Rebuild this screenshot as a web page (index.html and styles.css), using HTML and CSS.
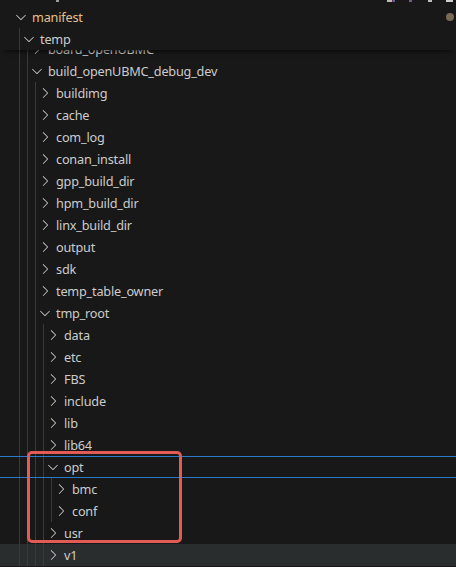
FILE: index.html
```html
<!DOCTYPE html>
<html>
<head>
<meta charset="utf-8">
<link rel="stylesheet" href="styles.css">
</head>
<body>
<div class="explorer">
  <div class="top-strip">
    <span class="frag f1"></span>
    <span class="spacer"></span>
    <span class="frag f2"></span>
    <span class="frag f3"></span>
    <span class="frag f4"></span>
    <span class="frag f5"></span>
  </div>
  <div class="sticky">
    <div class="row">
      <span class="twistie"><svg viewBox="0 0 16 16"><path d="M7.976 10.072l4.357-4.357.62.618L8.284 11h-.618L3 6.333l.619-.618 4.357 4.357z"/></svg></span>
      <span class="label modified">manifest</span>
      <span class="dot"></span>
    </div>
    <div class="row">
      <span class="ig"></span>
      <span class="twistie"><svg viewBox="0 0 16 16"><path d="M7.976 10.072l4.357-4.357.62.618L8.284 11h-.618L3 6.333l.619-.618 4.357 4.357z"/></svg></span>
      <span class="label">temp</span>
    </div>
  </div>
  <div class="list">
    <div class="partial"><div class="row"><span class="ig"></span><span class="ig"></span><span class="twistie"><svg viewBox="0 0 16 16"><path d="M10.072 8.024L5.715 3.667l.618-.62L11 7.716v.618L6.333 13l-.618-.619 4.357-4.357z"/></svg></span><span class="label">board_openUBMC</span></div></div>
    <div class="row"><span class="ig"></span><span class="ig"></span><span class="twistie"><svg viewBox="0 0 16 16"><path d="M7.976 10.072l4.357-4.357.62.618L8.284 11h-.618L3 6.333l.619-.618 4.357 4.357z"/></svg></span><span class="label">build_openUBMC_debug_dev</span></div>
    <div class="row"><span class="ig"></span><span class="ig"></span><span class="ig"></span><span class="twistie"><svg viewBox="0 0 16 16"><path d="M10.072 8.024L5.715 3.667l.618-.62L11 7.716v.618L6.333 13l-.618-.619 4.357-4.357z"/></svg></span><span class="label">buildimg</span></div>
    <div class="row"><span class="ig"></span><span class="ig"></span><span class="ig"></span><span class="twistie"><svg viewBox="0 0 16 16"><path d="M10.072 8.024L5.715 3.667l.618-.62L11 7.716v.618L6.333 13l-.618-.619 4.357-4.357z"/></svg></span><span class="label">cache</span></div>
    <div class="row"><span class="ig"></span><span class="ig"></span><span class="ig"></span><span class="twistie"><svg viewBox="0 0 16 16"><path d="M10.072 8.024L5.715 3.667l.618-.62L11 7.716v.618L6.333 13l-.618-.619 4.357-4.357z"/></svg></span><span class="label">com_log</span></div>
    <div class="row"><span class="ig"></span><span class="ig"></span><span class="ig"></span><span class="twistie"><svg viewBox="0 0 16 16"><path d="M10.072 8.024L5.715 3.667l.618-.62L11 7.716v.618L6.333 13l-.618-.619 4.357-4.357z"/></svg></span><span class="label">conan_install</span></div>
    <div class="row"><span class="ig"></span><span class="ig"></span><span class="ig"></span><span class="twistie"><svg viewBox="0 0 16 16"><path d="M10.072 8.024L5.715 3.667l.618-.62L11 7.716v.618L6.333 13l-.618-.619 4.357-4.357z"/></svg></span><span class="label">gpp_build_dir</span></div>
    <div class="row"><span class="ig"></span><span class="ig"></span><span class="ig"></span><span class="twistie"><svg viewBox="0 0 16 16"><path d="M10.072 8.024L5.715 3.667l.618-.62L11 7.716v.618L6.333 13l-.618-.619 4.357-4.357z"/></svg></span><span class="label">hpm_build_dir</span></div>
    <div class="row"><span class="ig"></span><span class="ig"></span><span class="ig"></span><span class="twistie"><svg viewBox="0 0 16 16"><path d="M10.072 8.024L5.715 3.667l.618-.62L11 7.716v.618L6.333 13l-.618-.619 4.357-4.357z"/></svg></span><span class="label">linx_build_dir</span></div>
    <div class="row"><span class="ig"></span><span class="ig"></span><span class="ig"></span><span class="twistie"><svg viewBox="0 0 16 16"><path d="M10.072 8.024L5.715 3.667l.618-.62L11 7.716v.618L6.333 13l-.618-.619 4.357-4.357z"/></svg></span><span class="label">output</span></div>
    <div class="row"><span class="ig"></span><span class="ig"></span><span class="ig"></span><span class="twistie"><svg viewBox="0 0 16 16"><path d="M10.072 8.024L5.715 3.667l.618-.62L11 7.716v.618L6.333 13l-.618-.619 4.357-4.357z"/></svg></span><span class="label">sdk</span></div>
    <div class="row"><span class="ig"></span><span class="ig"></span><span class="ig"></span><span class="twistie"><svg viewBox="0 0 16 16"><path d="M10.072 8.024L5.715 3.667l.618-.62L11 7.716v.618L6.333 13l-.618-.619 4.357-4.357z"/></svg></span><span class="label">temp_table_owner</span></div>
    <div class="row"><span class="ig"></span><span class="ig"></span><span class="ig"></span><span class="twistie"><svg viewBox="0 0 16 16"><path d="M7.976 10.072l4.357-4.357.62.618L8.284 11h-.618L3 6.333l.619-.618 4.357 4.357z"/></svg></span><span class="label">tmp_root</span></div>
    <div class="row"><span class="ig"></span><span class="ig"></span><span class="ig"></span><span class="ig"></span><span class="twistie"><svg viewBox="0 0 16 16"><path d="M10.072 8.024L5.715 3.667l.618-.62L11 7.716v.618L6.333 13l-.618-.619 4.357-4.357z"/></svg></span><span class="label">data</span></div>
    <div class="row"><span class="ig"></span><span class="ig"></span><span class="ig"></span><span class="ig"></span><span class="twistie"><svg viewBox="0 0 16 16"><path d="M10.072 8.024L5.715 3.667l.618-.62L11 7.716v.618L6.333 13l-.618-.619 4.357-4.357z"/></svg></span><span class="label">etc</span></div>
    <div class="row"><span class="ig"></span><span class="ig"></span><span class="ig"></span><span class="ig"></span><span class="twistie"><svg viewBox="0 0 16 16"><path d="M10.072 8.024L5.715 3.667l.618-.62L11 7.716v.618L6.333 13l-.618-.619 4.357-4.357z"/></svg></span><span class="label">FBS</span></div>
    <div class="row"><span class="ig"></span><span class="ig"></span><span class="ig"></span><span class="ig"></span><span class="twistie"><svg viewBox="0 0 16 16"><path d="M10.072 8.024L5.715 3.667l.618-.62L11 7.716v.618L6.333 13l-.618-.619 4.357-4.357z"/></svg></span><span class="label">include</span></div>
    <div class="row"><span class="ig"></span><span class="ig"></span><span class="ig"></span><span class="ig"></span><span class="twistie"><svg viewBox="0 0 16 16"><path d="M10.072 8.024L5.715 3.667l.618-.62L11 7.716v.618L6.333 13l-.618-.619 4.357-4.357z"/></svg></span><span class="label">lib</span></div>
    <div class="row"><span class="ig"></span><span class="ig"></span><span class="ig"></span><span class="ig"></span><span class="twistie"><svg viewBox="0 0 16 16"><path d="M10.072 8.024L5.715 3.667l.618-.62L11 7.716v.618L6.333 13l-.618-.619 4.357-4.357z"/></svg></span><span class="label">lib64</span></div>
    <div class="row focused"><span class="ig"></span><span class="ig"></span><span class="ig"></span><span class="ig"></span><span class="twistie"><svg viewBox="0 0 16 16"><path d="M7.976 10.072l4.357-4.357.62.618L8.284 11h-.618L3 6.333l.619-.618 4.357 4.357z"/></svg></span><span class="label">opt</span></div>
    <div class="row"><span class="ig"></span><span class="ig"></span><span class="ig"></span><span class="ig"></span><span class="ig"></span><span class="twistie"><svg viewBox="0 0 16 16"><path d="M10.072 8.024L5.715 3.667l.618-.62L11 7.716v.618L6.333 13l-.618-.619 4.357-4.357z"/></svg></span><span class="label">bmc</span></div>
    <div class="row"><span class="ig"></span><span class="ig"></span><span class="ig"></span><span class="ig"></span><span class="ig"></span><span class="twistie"><svg viewBox="0 0 16 16"><path d="M10.072 8.024L5.715 3.667l.618-.62L11 7.716v.618L6.333 13l-.618-.619 4.357-4.357z"/></svg></span><span class="label">conf</span></div>
    <div class="row"><span class="ig"></span><span class="ig"></span><span class="ig"></span><span class="ig"></span><span class="twistie"><svg viewBox="0 0 16 16"><path d="M10.072 8.024L5.715 3.667l.618-.62L11 7.716v.618L6.333 13l-.618-.619 4.357-4.357z"/></svg></span><span class="label">usr</span></div>
    <div class="row hovered"><span class="ig"></span><span class="ig"></span><span class="ig"></span><span class="ig"></span><span class="twistie"><svg viewBox="0 0 16 16"><path d="M10.072 8.024L5.715 3.667l.618-.62L11 7.716v.618L6.333 13l-.618-.619 4.357-4.357z"/></svg></span><span class="label">v1</span></div>
  </div>
  <div class="highlight-box"></div>
</div>
</body>
</html>
```
FILE: styles.css
```css
html, body {
  margin: 0;
  padding: 0;
  background: #181818;
  overflow: hidden;
}
.explorer {
  position: relative;
  width: 456px;
  height: 567px;
  overflow: hidden;
  font-family: "Noto Sans", "Open Sans", sans-serif;
  font-size: 12.7px;
  letter-spacing: -0.2px;
  color: #cccccc;
  background: #181818;
}
.top-strip {
  height: 6px;
  display: flex;
  align-items: flex-start;
  padding: 0 0 0 56px;
}
.spacer { flex: 1; }
.frag {
  height: 2px;
  background: #9a9a9a;
}
.f1 { width: 3px; }
.f2 { width: 8px; margin-right: 14px; background: linear-gradient(to right, #bbbbbb 60%, #7a2a3a 60%, #7a2a3a 80%, #4a6ab0 80%); }
.f3 { width: 3px; margin-right: 16px; background: #7a5a8a; }
.f4 { width: 4px; margin-right: 14px; background: #bdbdbd; }
.f5 { width: 7px; margin-right: 3px; background: #cfcfcf; }
.sticky {
  position: relative;
  z-index: 2;
  background: #181818;
  box-shadow: #000000 0 6px 6px -6px;
}
.partial {
  height: 10px;
  overflow: hidden;
  display: flex;
  flex-direction: column;
  justify-content: flex-end;
}
.partial .row {
  flex: none;
}
.row {
  box-sizing: border-box;
  height: 22px;
  line-height: 22px;
  display: flex;
  align-items: center;
  padding-left: 13px;
  white-space: nowrap;
}
.ig {
  width: 8px;
  height: 22px;
  flex: none;
  background: linear-gradient(to right, transparent 6px, #3a3a3a 6px, #3a3a3a 7px, transparent 7px);
}
.twistie {
  width: 16px;
  height: 16px;
  flex: none;
  display: flex;
  align-items: center;
  justify-content: center;
}
.twistie svg {
  width: 16px;
  height: 16px;
  fill: #c5c5c5;
}
.label {
  margin-left: 3px;
}
.modified {
  color: #e2c08d;
  flex: 1;
}
.dot {
  width: 8px;
  height: 8px;
  border-radius: 50%;
  background: #786b55;
  margin-right: 2px;
  margin-top: -1px;
}
.focused {
  border-top: 1px solid #2b79c9;
  border-bottom: 1px solid #2b79c9;
}
.focused .ig {
  height: 20px;
}
.hovered {
  background: #2a2d2e;
}
.highlight-box {
  position: absolute;
  left: 27px;
  top: 451px;
  width: 149px;
  height: 86px;
  border: 3px solid #e35b57;
  border-radius: 5px;
}
```
